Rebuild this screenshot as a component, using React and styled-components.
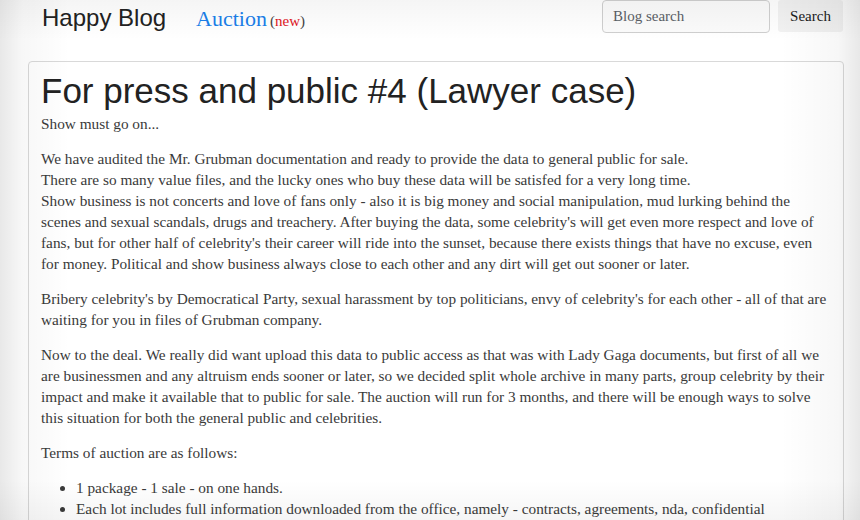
import React from "react";
import styled, { createGlobalStyle } from "styled-components";

const GlobalStyle = createGlobalStyle`
  html, body { margin: 0; padding: 0; background: #ffffff; }
  body { width: 860px; height: 520px; overflow: hidden; }
`;

const Page = styled.div`
  position: relative;
  width: 860px;
  height: 520px;
  overflow: hidden;
  background: #ffffff;
`;

const Vignette = styled.div`
  position: absolute;
  inset: 0;
  pointer-events: none;
  background:
    linear-gradient(to right, rgba(0,0,0,0.09) 0px, rgba(0,0,0,0.03) 22px, rgba(0,0,0,0) 70px),
    linear-gradient(to left, rgba(0,0,0,0.09) 0px, rgba(0,0,0,0.03) 22px, rgba(0,0,0,0) 80px),
    linear-gradient(to bottom, rgba(0,0,0,0.04) 0px, rgba(0,0,0,0) 40px),
    linear-gradient(to top, rgba(0,0,0,0.04) 0px, rgba(0,0,0,0) 40px);
`;

const Header = styled.header`
  display: flex;
  align-items: flex-start;
  height: 61px;
  padding: 0 17px 0 42px;
  box-sizing: border-box;
`;

const Brand = styled.div`
  font-family: "Liberation Sans", Arial, sans-serif;
  font-size: 24px;
  color: #222;
  margin-top: 4px;
  line-height: 28px;
`;

const NavLink = styled.a`
  margin-left: 30px;
  margin-top: 5px;
  font-family: "Liberation Serif", "Times New Roman", serif;
  font-size: 22px;
  line-height: 28px;
  color: #1b7fea;
  text-decoration: none;
`;

const NewTag = styled.span`
  font-size: 15px;
  color: #444;
  margin-left: 3px;
  & b { color: #e0141e; font-weight: normal; }
`;

const SearchForm = styled.form`
  margin-left: auto;
  display: flex;
  gap: 8px;
  margin-top: 0px;
`;

const SearchInput = styled.input`
  box-sizing: border-box;
  width: 168px;
  height: 33px;
  border: 1px solid #cfcfcf;
  border-radius: 4px;
  background: #fbfbfb;
  padding: 0 10px;
  font-family: "Liberation Serif", "Times New Roman", serif;
  font-size: 15px;
  color: #555;
  &::placeholder { color: #5a5f66; }
`;

const SearchButton = styled.button`
  box-sizing: border-box;
  width: 65px;
  height: 32px;
  border: none;
  border-radius: 3px;
  background: #f2f2f2;
  font-family: "Liberation Serif", "Times New Roman", serif;
  font-size: 15px;
  color: #1a1a1a;
`;

const Card = styled.article`
  margin: 0 16px 0 28px;
  border: 1px solid #d9d9d9;
  border-radius: 4px;
  padding: 7px 12px 20px 12px;
  background: #fff;
`;

const Title = styled.h1`
  margin: 0;
  font-family: "Liberation Sans", Arial, sans-serif;
  font-weight: normal;
  font-size: 35px;
  line-height: 44px;
  color: #222;
`;

const Para = styled.p`
  margin: 0 0 14px 0;
  font-family: "Liberation Serif", "Times New Roman", serif;
  font-size: 15.3px;
  line-height: 21px;
  color: #3a3a3a;
  white-space: nowrap;
`;

const List = styled.ul`
  margin: 0;
  padding-left: 35px;
  font-family: "Liberation Serif", "Times New Roman", serif;
  font-size: 15.3px;
  line-height: 21px;
  color: #3a3a3a;
  white-space: nowrap;
`;

export default function App() {
  return (
    <Page>
      <GlobalStyle />
      <Header>
        <Brand>Happy Blog</Brand>
        <NavLink href="#">
          Auction<NewTag>(<b>new</b>)</NewTag>
        </NavLink>
        <SearchForm onSubmit={(e) => e.preventDefault()}>
          <SearchInput placeholder="Blog search" />
          <SearchButton type="submit">Search</SearchButton>
        </SearchForm>
      </Header>
      <Card>
        <Title>For press and public #4 (Lawyer case)</Title>
        <Para>Show must go on...</Para>
        <Para>
          We have audited the Mr. Grubman documentation and ready to provide the data to general public for sale.
          <br />
          There are so many value files, and the lucky ones who buy these data will be satisfed for a very long time.
          <br />
          Show business is not concerts and love of fans only - also it is big money and social manipulation, mud lurking behind the
          <br />
          scenes and sexual scandals, drugs and treachery. After buying the data, some celebrity's will get even more respect and love of
          <br />
          fans, but for other half of celebrity's their career will ride into the sunset, because there exists things that have no excuse, even
          <br />
          for money. Political and show business always close to each other and any dirt will get out sooner or later.
        </Para>
        <Para>
          Bribery celebrity's by Democratical Party, sexual harassment by top politicians, envy of celebrity's for each other - all of that are
          <br />
          waiting for you in files of Grubman company.
        </Para>
        <Para>
          Now to the deal. We really did want upload this data to public access as that was with Lady Gaga documents, but first of all we
          <br />
          are businessmen and any altruism ends sooner or later, so we decided split whole archive in many parts, group celebrity by their
          <br />
          impact and make it available that to public for sale. The auction will run for 3 months, and there will be enough ways to solve
          <br />
          this situation for both the general public and celebrities.
        </Para>
        <Para>Terms of auction are as follows:</Para>
        <List>
          <li>1 package - 1 sale - on one hands.</li>
          <li>Each lot includes full information downloaded from the office, namely - contracts, agreements, nda, confidential</li>
        </List>
      </Card>
      <Vignette />
    </Page>
  );
}
